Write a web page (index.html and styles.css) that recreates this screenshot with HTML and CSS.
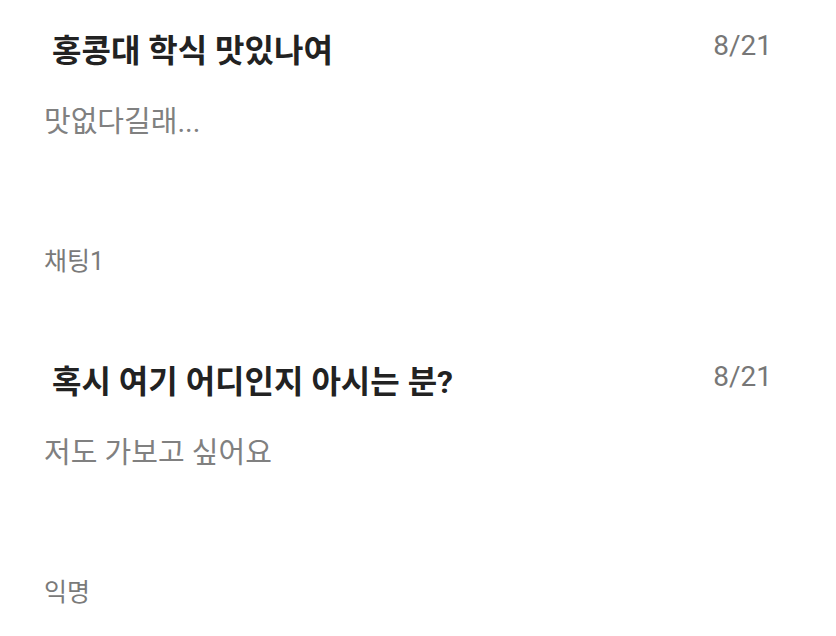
FILE: index.html
```html
<!DOCTYPE html>
<html lang="ko">
<head>
<meta charset="utf-8">
<title>게시판</title>
<link rel="stylesheet" href="styles.css">
</head>
<body>
<ul class="post-list">
  <li class="post">
    <div class="post-head">
      <h2 class="post-title">홍콩대 학식 맛있나여</h2>
      <span class="post-date">8/21</span>
    </div>
    <p class="post-preview">맛없다길래...</p>
    <p class="post-author">채팅1</p>
  </li>
  <li class="post">
    <div class="post-head">
      <h2 class="post-title">혹시 여기 어디인지 아시는 분?</h2>
      <span class="post-date">8/21</span>
    </div>
    <p class="post-preview">저도 가보고 싶어요</p>
    <p class="post-author">익명</p>
  </li>
</ul>
</body>
</html>
```

FILE: styles.css
```css
html, body {
  margin: 0;
  padding: 0;
  background: #ffffff;
  font-family: Roboto, "Noto Sans CJK KR", sans-serif;
}

.post-list {
  list-style: none;
  margin: 0;
  padding: 0;
}

.post {
  padding: 31px 64px 53px 44px;
}

.post-head {
  display: flex;
  justify-content: space-between;
  align-items: flex-start;
}

.post-title {
  margin: 0 0 0 8px;
  font-size: 32px;
  line-height: 40px;
  font-weight: 700;
  color: #222222;
}

.post-date {
  margin-top: -2px;
  font-size: 28px;
  line-height: 34px;
  color: #777777;
}

.post-preview {
  margin: 33px 0 0;
  font-size: 29px;
  line-height: 36px;
  color: #808080;
}

.post-author {
  margin: 106px 0 0;
  font-size: 25px;
  line-height: 32px;
  color: #7a7a7a;
}
```
